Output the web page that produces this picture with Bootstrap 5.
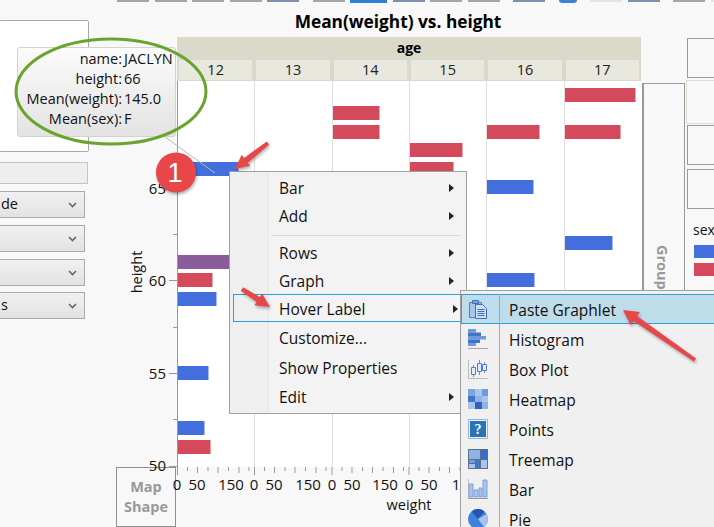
<!DOCTYPE html>
<html lang="en">
<head>
<meta charset="utf-8">
<title>Mean(weight) vs. height</title>
<link rel="stylesheet" href="https://cdn.jsdelivr.net/npm/bootstrap@5.3.0/dist/css/bootstrap.min.css">
<style>
html,body{margin:0;background:#f8f8f8;overflow:hidden}
body{font-family:"Open Sans","Liberation Sans",sans-serif;font-size:15px;color:#111}
.stage{position:relative;width:714px;height:527px;overflow:hidden;background:#f8f8f8}
.tbar{height:3px;padding-left:117px;gap:5.5px;flex:none}
.tb{width:32px;height:2px;background:#a6a6a6;flex:none}
.tb-gap{margin-left:8px}
.tb-steel{background:#7f8fae}
.tb-blue{background:#2f7fd4;height:3px;width:37px}
.tb-pale{background:#e4e4e4}
.tb-disc{background:#3f7fd8;width:18px;height:3px;border-radius:0 0 9px 9px}
.leftcol{width:116px;flex:none;padding-top:17px}
.lpanel{width:90px;height:132px;margin-left:-1px;background:#fff;border:1px solid #a8a8a8;border-radius:2px}
.lbar{width:89px;height:22px;margin:10px 0 7px -1px;background:#eee;border:1px solid #c4c4c4}
.ddn{width:86px;height:27px;margin:0 0 7px -1px;padding:0 7px 0 1px;border:1px solid #aaa;border-radius:0;background:linear-gradient(#f1f1f1,#e2e2e2);color:#111;font-size:14.5px;line-height:1}
.ddn:last-child{margin-top:-1px}
.midcol{width:569px;flex:none}
.ttl{height:34px;font-weight:700;font-size:17.3px;color:#000;padding:7px 5px 0 0;line-height:24px;white-space:nowrap}
.axcol{width:61px;flex:none}
.axtop{height:44px}
.yscale{position:relative;height:386px}
.ylab{position:absolute;right:11px;line-height:18px;transform:translateY(-50%)}
.ytitle{position:absolute;left:13px;top:191px;font-size:14.5px;line-height:16px;writing-mode:vertical-rl;transform:rotate(180deg) translateY(50%)}
.yticks{position:absolute;left:0;top:0}
.mapbox{height:60px;border:1px solid #909090;color:#999;font-weight:700;font-size:14.5px;line-height:20px;margin-right:1px}
.plotcol{width:464px;flex:none}
.agebar{height:22px;background:#dbd9ca;font-weight:700;font-size:14px;color:#000;line-height:22px}
.cellrow{height:22px;background:#f4f4ee}
.agecell{flex:1 1 0;background:#e8e8df;border:1px solid #d9d9ca;border-width:1px 2px;line-height:20px;font-size:14.5px;color:#222}
.plotarea{height:386px;background:#fff;border-left:1px solid #999}
.facet{position:relative;flex:1 1 0;border-right:1px solid #ddd}
.facet:last-child{border-right:0}
.gbar{position:absolute;left:0;height:14px}
.g-b{background:#436fdc;box-shadow:1px 0 0 #a7b9ee}
.g-r{background:#d4495b;box-shadow:1px 0 0 #e8a3ab}
.g-p{background:#8c5b9c}
.xscale{position:relative;height:60px}
.xlab{position:absolute;top:7px;line-height:20px;transform:translateX(-50%)}
.xtitle{padding-top:28px;line-height:20px;font-size:14.5px}
.grpbox{width:43px;margin:46px 0 0 1px;height:380px;padding:161px 4px 0 0;border:1px solid #999;border-left-width:2px;color:#999;font-weight:700;font-size:14.5px}
.grpbox span{writing-mode:vertical-rl;line-height:16px}
.rightcol{padding:35px 0 0 2px;flex:1 1 0;min-width:0}
.rbox{width:60px;height:40px;border:1px solid #999;margin-bottom:2px}
.rbox-l{height:44px;margin:0 0 1px -1px;width:61px;border-color:#dcdccf}
.rbox-s{margin-bottom:4px}
.sexlab{margin:12px 0 6px 6px;line-height:18px;font-size:14px}
.swatch{width:30px;height:13px;margin:0 0 5px 7px}
.tip{position:absolute;left:17px;top:47px;width:159px;height:90px;border:1px solid #d2d2d2;border-radius:3px;background:linear-gradient(#fbfbfb,#e3e3e3);line-height:20px;padding-top:1px;z-index:3;grid-template-columns:104px auto;align-content:start;column-gap:2px;font-size:14.5px;white-space:nowrap}
.tip b{font-weight:400;text-align:right}
.ctx{position:absolute;display:block;margin:0;padding:2px 0 0;border:1px solid #a0a0a0;border-radius:0;min-width:0;font-size:15.5px;z-index:4}
.ctx-a{left:229px;top:171px;width:238px;height:243px;background:linear-gradient(90deg,#efefef 38px,#e6e6e6 38px,#e6e6e6 39px,#f3f3f3 39px)}
.ctx-a .dropdown-item{height:28px;padding:0 12px 0 49px;color:#111;line-height:28px;background:transparent;white-space:nowrap}
.ctx-a .it-t{height:30px;line-height:30px}
.ctx-a .dropdown-divider{margin:5px 5px 3px 41px;border-color:#dcdcdc;opacity:1;border-top-width:1px;background:none}
.ctx-a .it-hov{margin:-1px 0 1px 3px;padding:2px 15px 0 46px;width:240px;box-shadow:inset 0 0 0 1px #2ba0dc}
.tri{width:0;height:0;border-style:solid;border-width:4.5px 0 4.5px 5px;border-color:transparent transparent transparent #222;flex:none}
.ctx-b{left:460px;top:290px;width:280px;height:260px;background:#f0f0f0;padding-top:3px;z-index:5}
.ctx-b .dropdown-item{height:30px;padding:2px 0 0 2px;color:#111;line-height:28px;background:transparent}
.ctx-b .it-on{background:#bfdcea;box-shadow:inset 0 0 0 1px #2ba0dc}
.icn{width:37px;height:30px;margin-top:-2px;border-right:1px solid #a8a8a8;margin-right:9px;padding-left:5px;flex:none}
.icn svg{display:block}
.anno{position:absolute;left:0;top:0;z-index:6;pointer-events:none}
.ar{filter:drop-shadow(1px 2px 1.5px rgba(0,0,0,.3))}
</style>
</head>
<body>
<div class="stage d-flex flex-column">
  <div class="tbar d-flex align-items-start">
    <i class="tb"></i><i class="tb"></i><i class="tb"></i><i class="tb"></i><i class="tb tb-steel"></i>
    <i class="tb tb-gap"></i><i class="tb tb-blue"></i><i class="tb tb-steel"></i><i class="tb"></i><i class="tb"></i>
    <i class="tb tb-gap tb-steel"></i><i class="tb tb-disc tb-gap"></i><i class="tb tb-pale tb-gap"></i><i class="tb tb-steel"></i><i class="tb tb-gap"></i><i class="tb tb-pale"></i>
  </div>

  <div class="d-flex flex-grow-1">
    <div class="leftcol">
      <div class="lpanel"></div>
      <div class="lbar"></div>
      <div class="btn ddn d-flex align-items-center justify-content-between"><span>de</span><svg width="9" height="6" viewBox="0 0 9 6"><path d="M1 1l3.500 3.500L8 1" fill="none" stroke="#666" stroke-width="1.600"/></svg></div>
      <div class="btn ddn d-flex align-items-center justify-content-end"><svg width="9" height="6" viewBox="0 0 9 6"><path d="M1 1l3.500 3.500L8 1" fill="none" stroke="#666" stroke-width="1.600"/></svg></div>
      <div class="btn ddn d-flex align-items-center justify-content-end"><svg width="9" height="6" viewBox="0 0 9 6"><path d="M1 1l3.500 3.500L8 1" fill="none" stroke="#666" stroke-width="1.600"/></svg></div>
      <div class="btn ddn d-flex align-items-center justify-content-between"><span>s</span><svg width="9" height="6" viewBox="0 0 9 6"><path d="M1 1l3.500 3.500L8 1" fill="none" stroke="#666" stroke-width="1.600"/></svg></div>
    </div>

    <div class="midcol">
      <div class="ttl text-center">Mean(weight) vs. height</div>
      <div class="d-flex">
        <div class="axcol">
          <div class="axtop"></div>
          <div class="yscale">
            <svg class="yticks" width="61" height="386" viewBox="0 0 61 386"><path d="M53 107.500h8M53 199.500h8M53 292.500h8M53 385.500h8M57 153.500h4M57 246.500h4M57 338.500h4" stroke="#999"/></svg>
            <span class="ytitle">height</span>
            <span class="ylab" style="top:107px">65</span>
            <span class="ylab" style="top:199px">60</span>
            <span class="ylab" style="top:292px">55</span>
            <span class="ylab" style="top:384px">50</span>
          </div>
          <div class="mapbox d-flex flex-column align-items-center justify-content-center"><span>Map</span><span>Shape</span></div>
        </div>

        <div class="plotcol">
          <div class="agebar text-center">age</div>
          <div class="cellrow d-flex text-center">
            <div class="agecell">12</div><div class="agecell">13</div><div class="agecell">14</div><div class="agecell">15</div><div class="agecell">16</div><div class="agecell">17</div>
          </div>
          <div class="plotarea d-flex">
            <div class="facet">
              <i class="gbar g-b" style="top:81px;width:60px"></i>
              <i class="gbar g-p" style="top:174px;width:70px"></i>
              <i class="gbar g-r" style="top:192px;width:34px"></i>
              <i class="gbar g-b" style="top:211px;width:38px"></i>
              <i class="gbar g-b" style="top:285px;width:30px"></i>
              <i class="gbar g-b" style="top:340px;width:26px"></i>
              <i class="gbar g-r" style="top:359px;width:32px"></i>
            </div>
            <div class="facet"></div>
            <div class="facet">
              <i class="gbar g-r" style="top:25px;width:46px"></i>
              <i class="gbar g-r" style="top:44px;width:46px"></i>
            </div>
            <div class="facet">
              <i class="gbar g-r" style="top:62px;width:52px"></i>
              <i class="gbar g-r" style="top:81px;width:43px"></i>
            </div>
            <div class="facet">
              <i class="gbar g-r" style="top:44px;width:52px"></i>
              <i class="gbar g-b" style="top:99px;width:46px"></i>
              <i class="gbar g-b" style="top:192px;width:47px"></i>
            </div>
            <div class="facet">
              <i class="gbar g-r" style="top:7px;width:70px"></i>
              <i class="gbar g-r" style="top:44px;width:55px"></i>
              <i class="gbar g-b" style="top:155px;width:47px"></i>
            </div>
          </div>
          <div class="xscale text-center">
            <svg class="yticks" width="464" height="9" viewBox="0 0 464 9"><path d="M.5 0v8M10.500 0v4M20.500 0v6M31 0v4M41 0v6M51.500 0v4M62 0v6M72 0v4M77.500 0v8M87.500 0v4M97.500 0v6M108 0v4M118 0v6M128.500 0v4M139 0v6M149 0v4M155 0v8M165 0v4M175 0v6M185.500 0v4M195.500 0v6M206 0v4M216.500 0v6M226.500 0v4M232 0v8M242 0v4M252 0v6M262.500 0v4M272.500 0v6M283 0v4" stroke="#999" fill="none"/></svg>
            <span class="xlab" style="left:0">0</span><span class="xlab" style="left:20px">50</span><span class="xlab" style="left:54px">150</span>
            <span class="xlab" style="left:77px">0</span><span class="xlab" style="left:97px">50</span><span class="xlab" style="left:131px">150</span>
            <span class="xlab" style="left:155px">0</span><span class="xlab" style="left:175px">50</span><span class="xlab" style="left:208px">150</span>
            <span class="xlab" style="left:232px">0</span><span class="xlab" style="left:252px">50</span><span class="xlab" style="left:279px">1</span>
            <div class="xtitle">weight</div>
          </div>
        </div>

        <div class="grpbox text-center"><span>Group</span></div>
      </div>
    </div>

    <div class="rightcol">
      <div class="rbox"></div>
      <div class="rbox rbox-l"></div>
      <div class="rbox rbox-s"></div>
      <div class="rbox"></div>
      <div class="sexlab">sex</div>
      <div class="swatch g-b"></div>
      <div class="swatch g-r"></div>
    </div>
  </div>

  <div class="tip d-grid">
    <b>name:</b><span>JACLYN</span>
    <b>height:</b><span>66</span>
    <b>Mean(weight):</b><span>145.0</span>
    <b>Mean(sex):</b><span>F</span>
  </div>

  <div class="dropdown-menu ctx ctx-a">
    <a class="dropdown-item d-flex justify-content-between align-items-center">Bar<i class="tri"></i></a>
    <a class="dropdown-item d-flex justify-content-between align-items-center">Add<i class="tri"></i></a>
    <hr class="dropdown-divider">
    <a class="dropdown-item d-flex justify-content-between align-items-center">Rows<i class="tri"></i></a>
    <a class="dropdown-item d-flex justify-content-between align-items-center">Graph<i class="tri"></i></a>
    <a class="dropdown-item it-hov d-flex justify-content-between align-items-center">Hover Label<i class="tri"></i></a>
    <a class="dropdown-item it-t">Customize...</a>
    <a class="dropdown-item it-t">Show Properties</a>
    <a class="dropdown-item d-flex justify-content-between align-items-center">Edit<i class="tri"></i></a>
  </div>

  <div class="dropdown-menu ctx ctx-b">
    <a class="dropdown-item it-on d-flex align-items-center"><span class="icn d-flex align-items-center"><svg width="20" height="20" viewBox="0 0 20 20"><path d="M1.500 3.500h12v15h-12z" fill="#a9c4ea" stroke="#4f7fc4"/><path d="M4.500 1.500h6v3h-6z" fill="#7ba4e0" stroke="#3f6fb8"/><path d="M7.500 5.500h7l4 4v10h-11z" fill="#cfe0f5" stroke="#3f6fb8"/><path d="M9.500 10.500h7M9.500 12.500h7M9.500 14.500h7M9.500 16.500h7" stroke="#3f6fb8"/></svg></span>Paste Graphlet</a>
    <a class="dropdown-item d-flex align-items-center"><span class="icn d-flex align-items-center"><svg width="20" height="20" viewBox="0 0 20 20"><path d="M0 0h8v3.500H0z" fill="#6f9bdc"/><path d="M0 3.500h13V7H0z" fill="#3f77c8"/><path d="M0 7h18v3.500H0z" fill="#6f9bdc"/><path d="M0 10.500h12V14H0z" fill="#3f77c8"/><path d="M0 14h8v3H0z" fill="#6f9bdc"/><path d="M0 19.500h20" stroke="#aaa"/></svg></span>Histogram</a>
    <a class="dropdown-item d-flex align-items-center"><span class="icn d-flex align-items-center"><svg width="20" height="20" viewBox="0 0 20 20"><path d="M.5 1v18.500h19" fill="none" stroke="#bbb"/><path d="M5.500 6v12M11.500 1v15M16.500 3v11" stroke="#6d92cf"/><path d="M3.500 8.500h4v7h-4zM9.500 4.500h4v8h-4zM14.500 5.500h4v6h-4z" fill="#e3ebf8" stroke="#4f80cc"/></svg></span>Box Plot</a>
    <a class="dropdown-item d-flex align-items-center"><span class="icn d-flex align-items-center"><svg width="20" height="20" viewBox="0 0 20 20"><path d="M0 0h7v7H0z" fill="#7ba4e0"/><path d="M7 0h7v7H7z" fill="#a9c4ea"/><path d="M14 0h6v7h-6z" fill="#6f9bdc"/><path d="M0 7h7v6H0z" fill="#3f77c8"/><path d="M7 7h7v6H7z" fill="#8fb3e6"/><path d="M14 7h6v6h-6z" fill="#a9c4ea"/><path d="M0 13h7v7H0z" fill="#a9c4ea"/><path d="M7 13h7v7H7z" fill="#2f63bd"/><path d="M14 13h6v7h-6z" fill="#8fb3e6"/></svg></span>Heatmap</a>
    <a class="dropdown-item d-flex align-items-center"><span class="icn d-flex align-items-center"><svg width="20" height="20" viewBox="0 0 20 20"><path d="M.5.500h19v19H.5z" fill="#e8f0fa" stroke="#8fb3dc"/><path d="M2 2h16v16H2z" fill="#2a74b4"/><text x="10" y="15" text-anchor="middle" font-family="Liberation Serif,serif" font-weight="700" font-size="14" fill="#fff">?</text></svg></span>Points</a>
    <a class="dropdown-item d-flex align-items-center"><span class="icn d-flex align-items-center"><svg width="20" height="20" viewBox="0 0 20 20"><path d="M0 0h20v20H0z" fill="#5a6f8c"/><path d="M1 1h11v9H1z" fill="#8fb3e6"/><path d="M13 1h6v9h-6z" fill="#2f6fd0"/><path d="M1 11h6v3H1z" fill="#6f9bdc"/><path d="M1 15h6v4H1z" fill="#a9c4ea"/><path d="M8 11h4v8H8z" fill="#3f77c8"/><path d="M13 11h6v8h-6z" fill="#a9c4ea"/></svg></span>Treemap</a>
    <a class="dropdown-item d-flex align-items-center"><span class="icn d-flex align-items-center"><svg width="20" height="20" viewBox="0 0 20 20"><path d="M1 5h4v13H1z" fill="#a9c4ea" stroke="#7ba4e0"/><path d="M6 11h4v7H6z" fill="#a9c4ea" stroke="#7ba4e0"/><path d="M11 9h3v9h-3z" fill="#a9c4ea" stroke="#7ba4e0"/><path d="M15 1h4v17h-4z" fill="#a9c4ea" stroke="#7ba4e0"/><path d="M0 0v19.500h20" fill="none" stroke="#999"/></svg></span>Bar</a>
    <a class="dropdown-item d-flex align-items-center"><span class="icn d-flex align-items-center"><svg width="20" height="20" viewBox="0 0 20 20"><circle cx="10" cy="10" r="10" fill="#3f82dc"/><path d="M10 10L3.500 2.400A10 10 0 0 1 16.500 2.400z" fill="#2555ae"/><path d="M10 10l8.500-5A10 10 0 0 1 16 18z" fill="#a9c4ea"/></svg></span>Pie</a>
  </div>

  <svg class="anno" width="714" height="527" viewBox="0 0 714 527">
    <path d="M165 137L215 173" stroke="#bbb" fill="none"/>
    <ellipse cx="111" cy="91.500" rx="95" ry="52.500" fill="none" stroke="#6aa32d" stroke-width="3"/>
    <circle class="ar" cx="176" cy="172.500" r="20" fill="#e8474a"/>
    <text x="175" y="182" text-anchor="middle" font-family="Liberation Sans,sans-serif" font-size="27" fill="#fff">1</text>
    <g class="ar" fill="#e8474a">
      <path d="M235 169L250.300 165.800 247.900 162.700 269.200 144.600 266.800 141.400 244.100 157.900 241.700 154.800Z"/>
      <path d="M270 307L254.400 305.300 256.600 301.900 240.900 290.700 243.100 287.300 259.800 296.900 262 293.500Z"/>
      <path d="M623 310L639.900 312 637 316.100 696.100 358.400 693.900 361.600 633.600 321 630.700 325.200Z"/>
    </g>
  </svg>
</div>
<script src="https://cdn.jsdelivr.net/npm/bootstrap@5.3.0/dist/js/bootstrap.bundle.min.js"></script>
</body>
</html>
